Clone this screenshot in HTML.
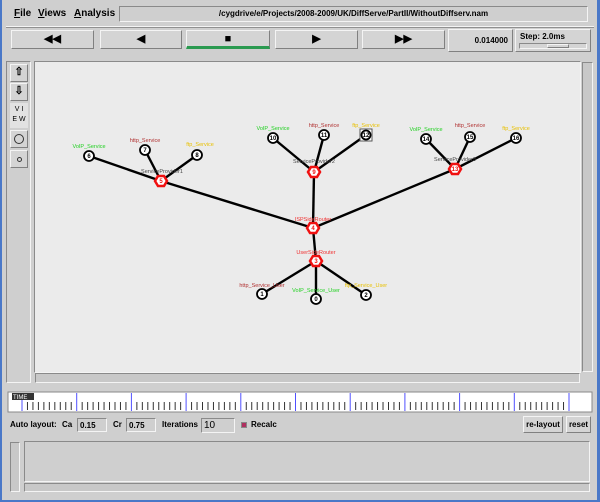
<!DOCTYPE html>
<html><head><meta charset="utf-8"><style>
*{margin:0;padding:0;box-sizing:border-box}
body{width:600px;height:502px;overflow:hidden;background:#cfcfcf;font-family:"Liberation Sans",sans-serif;font-size:10px;font-weight:bold;position:relative}
.a{position:absolute}
.rz{border:1px solid;border-color:#f4f4f4 #808080 #808080 #f4f4f4;background:#d4d4d4}
.sk{border:1px solid;border-color:#8a8a8a #f4f4f4 #f4f4f4 #8a8a8a}
.btn{position:absolute;top:30px;height:19px;border:1px solid;border-color:#f4f4f4 #808080 #808080 #f4f4f4;background:#d4d4d4;text-align:center;line-height:17px;font-size:11px}
.u{text-decoration:underline}
</style></head><body>
<div class="a" style="left:0;top:0;width:2px;height:502px;background:#4a78c8"></div>
<div class="a" style="right:0;top:0;width:3px;height:502px;background:#4a78c8"></div>
<div class="a" style="left:0;bottom:0;width:600px;height:2px;background:#4a78c8"></div>
<div class="a" style="left:6px;top:3px;width:588px;height:24px;border-bottom:1px solid #f4f4f4;box-shadow:0 1px 0 #909090"></div>
<div class="a" style="left:14px;top:8px;font-size:10px"><span class="u">F</span>ile</div>
<div class="a" style="left:38px;top:8px;font-size:10px"><span class="u">V</span>iews</div>
<div class="a" style="left:74px;top:8px;font-size:10px"><span class="u">A</span>nalysis</div>
<div class="a sk" style="left:119px;top:6px;width:469px;height:16px;text-align:center;line-height:14px;font-size:8px">/cygdrive/e/Projects/2008-2009/UK/DiffServe/PartII/WithoutDiffserv.nam</div>
<div class="btn" style="left:11px;width:83px">◀◀</div>
<div class="btn" style="left:100px;width:82px">◀</div>
<div class="btn" style="left:186px;width:84px;border-bottom:3px solid #2a9a50">■</div>
<div class="btn" style="left:275px;width:83px">▶</div>
<div class="btn" style="left:362px;width:83px">▶▶</div>
<div class="a rz" style="left:448px;top:29px;width:65px;height:23px;text-align:right;padding-right:4px;line-height:21px;font-size:8px">0.014000</div>
<div class="a rz" style="left:515px;top:29px;width:76px;height:23px;font-size:8px;padding:2px 4px">Step: 2.0ms
<div class="a sk" style="left:3px;top:13px;width:68px;height:6px"><div class="a rz" style="left:27px;top:0;width:22px;height:4px"></div></div></div>
<!-- left panel -->
<div class="a sk" style="left:6px;top:61px;width:25px;height:322px"></div>
<div class="a rz" style="left:10px;top:64px;width:18px;height:18px;text-align:center;font-size:11px;line-height:15px">⇧</div>
<div class="a rz" style="left:10px;top:83px;width:18px;height:18px;text-align:center;font-size:11px;line-height:15px">⇩</div>
<div class="a" style="left:10px;top:103px;width:18px;height:25px;background:#e2e2e2;font-size:7px;text-align:center;line-height:10px;padding-top:2px;font-weight:normal">V I<br>E W</div>
<div class="a rz" style="left:10px;top:130px;width:18px;height:18px"><div class="a" style="left:3px;top:3px;width:10px;height:10px;border:1px solid #333;border-radius:50%"></div></div>
<div class="a rz" style="left:10px;top:150px;width:18px;height:18px"><div class="a" style="left:6px;top:6px;width:5px;height:5px;border:1px solid #333;border-radius:50%"></div></div>
<!-- canvas -->
<div class="a sk" style="left:34px;top:61px;width:547px;height:312px;background:#ebebeb"></div>
<div class="a sk" style="left:35px;top:373px;width:545px;height:10px;background:#c8c8c8"></div>
<div class="a sk" style="left:582px;top:62px;width:11px;height:310px;background:#c8c8c8"></div>
<svg class="a" style="left:0;top:0" width="600" height="502" font-family="Liberation Sans,sans-serif" font-weight="bold">
<g stroke="#000" stroke-width="2.4">
<line x1="89" y1="156" x2="161" y2="181"/><line x1="145" y1="150" x2="161" y2="181"/><line x1="197" y1="155" x2="161" y2="181"/>
<line x1="161" y1="181" x2="313" y2="228"/>
<line x1="273" y1="138" x2="314" y2="172"/><line x1="324" y1="135" x2="314" y2="172"/><line x1="366" y1="135" x2="314" y2="172"/>
<line x1="314" y1="172" x2="313" y2="228"/>
<line x1="426" y1="139" x2="455" y2="169"/><line x1="470" y1="137" x2="455" y2="169"/><line x1="516" y1="138" x2="455" y2="169"/>
<line x1="455" y1="169" x2="313" y2="228"/>
<line x1="313" y1="228" x2="316" y2="261"/>
<line x1="316" y1="261" x2="262" y2="294"/><line x1="316" y1="261" x2="316" y2="299"/><line x1="316" y1="261" x2="366" y2="295"/>
</g>
<g fill="#fff" stroke="#000" stroke-width="1.8">
<circle cx="89" cy="156" r="5"/><circle cx="145" cy="150" r="5"/><circle cx="197" cy="155" r="5"/>
<circle cx="273" cy="138" r="5"/><circle cx="324" cy="135" r="5"/>
<circle cx="426" cy="139" r="5"/><circle cx="470" cy="137" r="5"/><circle cx="516" cy="138" r="5"/>
<circle cx="262" cy="294" r="5"/><circle cx="316" cy="299" r="5"/><circle cx="366" cy="295" r="5"/>
<rect x="360" y="129" width="12" height="12" stroke="#555" stroke-width="1"/><circle cx="366" cy="135" r="4.5"/>
</g>
<g font-size="6" text-anchor="middle" fill="#000">
<text x="89" y="158">6</text><text x="145" y="152">7</text><text x="197" y="157">8</text>
<text x="273" y="140">10</text><text x="324" y="137">11</text><text x="366" y="137">12</text>
<text x="426" y="141">14</text><text x="470" y="139">15</text><text x="516" y="140">16</text>
<text x="262" y="296">1</text><text x="316" y="301">0</text><text x="366" y="297">2</text>
</g>
<g fill="#fff" stroke="#f01010" stroke-width="2.5">
<polygon points="155,181 158,176 164,176 167,181 164,186 158,186"/>
<polygon points="308,172 311,167 317,167 320,172 317,177 311,177"/>
<polygon points="449,169 452,164 458,164 461,169 458,174 452,174"/>
<polygon points="307,228 310,223 316,223 319,228 316,233 310,233"/>
<polygon points="310,261 313,256 319,256 322,261 319,266 313,266"/>
</g>
<g font-size="6" text-anchor="middle" fill="#f01010">
<text x="161" y="183">5</text><text x="314" y="174">9</text><text x="455" y="171">13</text><text x="313" y="230">4</text><text x="316" y="263">3</text>
</g>
<g font-size="5.5" text-anchor="middle" font-weight="normal">
<text x="89" y="148" fill="#20d020">VoIP_Service</text>
<text x="145" y="142" fill="#b03030">http_Service</text>
<text x="200" y="146" fill="#e8c000">ftp_Service</text>
<text x="162" y="173" fill="#444">ServiceProvider1</text>
<text x="273" y="130" fill="#20d020">VoIP_Service</text>
<text x="324" y="127" fill="#b03030">http_Service</text>
<text x="366" y="127" fill="#e8c000">ftp_Service</text>
<text x="314" y="163" fill="#444">ServiceProvider2</text>
<text x="426" y="131" fill="#20d020">VoIP_Service</text>
<text x="470" y="127" fill="#b03030">http_Service</text>
<text x="516" y="130" fill="#e8c000">ftp_Service</text>
<text x="455" y="161" fill="#444">ServiceProvider3</text>
<text x="313" y="221" fill="#f03030">ISPSideRouter</text>
<text x="316" y="254" fill="#f03030">UserSideRouter</text>
<text x="262" y="287" fill="#b03030">http_Service_User</text>
<text x="316" y="292" fill="#20d020">VoIP_Service_User</text>
<text x="366" y="287" fill="#e8c000">ftp_Service_User</text>
</g>
<!-- timeline -->
<rect x="8" y="392" width="584" height="20" fill="#fff" stroke="#888"/>
<g stroke="#333" stroke-width="1" id="tk"></g>
<rect x="12" y="393" width="22" height="7" fill="#333"/>
<text x="13" y="399" font-size="6" fill="#fff" font-weight="normal">TIME</text>
</svg>
<script>
var g=document.getElementById('tk'),s='';
for(var i=0;i<11;i++){var x=22+i*54.7;s+='<line x1="'+x+'" y1="393" x2="'+x+'" y2="411" stroke="#5050ff"/>';
if(i<10)for(var j=1;j<10;j++){var xx=x+j*5.47;s+='<line x1="'+xx+'" y1="402" x2="'+xx+'" y2="410"/>';}}
g.innerHTML=s;
</script>
<div class="a" style="left:10px;top:420px;font-size:8px">Auto layout:</div>
<div class="a" style="left:62px;top:420px;font-size:8px">Ca</div>
<div class="a sk" style="left:77px;top:418px;width:30px;height:14px;font-size:8px;padding:2px">0.15</div>
<div class="a" style="left:113px;top:420px;font-size:8px">Cr</div>
<div class="a sk" style="left:126px;top:418px;width:30px;height:14px;font-size:8px;padding:2px">0.75</div>
<div class="a" style="left:162px;top:420px;font-size:8px">Iterations</div>
<div class="a sk" style="left:201px;top:418px;width:34px;height:15px;font-size:10px;padding:1px 2px;font-weight:normal">10</div>
<div class="a" style="left:241px;top:422px;width:6px;height:6px;background:#b03060;border:1px solid #888"></div>
<div class="a" style="left:251px;top:420px;font-size:8px">Recalc</div>
<div class="a rz" style="left:523px;top:416px;width:40px;height:17px;font-size:8px;text-align:center;line-height:15px">re-layout</div>
<div class="a rz" style="left:566px;top:416px;width:25px;height:17px;font-size:8px;text-align:center;line-height:15px">reset</div>
<div class="a sk" style="left:10px;top:442px;width:10px;height:50px;background:#c8c8c8"></div>
<div class="a sk" style="left:24px;top:441px;width:566px;height:41px"></div>
<div class="a sk" style="left:24px;top:483px;width:566px;height:9px;background:#c8c8c8"></div>
</body></html>
